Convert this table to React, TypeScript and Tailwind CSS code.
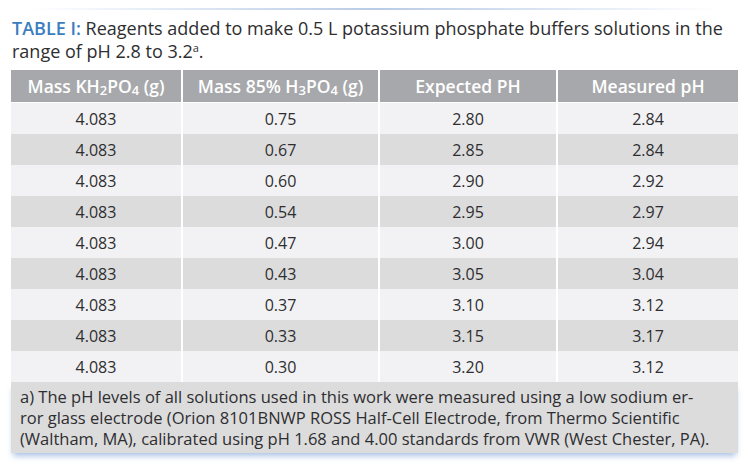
const rows = [
  ['4.083', '0.75', '2.80', '2.84'],
  ['4.083', '0.67', '2.85', '2.84'],
  ['4.083', '0.60', '2.90', '2.92'],
  ['4.083', '0.54', '2.95', '2.97'],
  ['4.083', '0.47', '3.00', '2.94'],
  ['4.083', '0.43', '3.05', '3.04'],
  ['4.083', '0.37', '3.10', '3.12'],
  ['4.083', '0.33', '3.15', '3.17'],
  ['4.083', '0.30', '3.20', '3.12'],
];

const cols = 'grid grid-cols-[170px_195px_176px_180px] gap-x-[2px]';

const Sub = ({ children }: { children: string }) => (
  <span className="relative top-[4px] text-[13px] leading-none">{children}</span>
);

export default function App() {
  return (
    <div className="w-[749px] h-[465px] bg-white font-['Open_Sans',sans-serif] text-[#2e2e30]">
      {/* top rule */}
      <div className="mx-[30px] mt-[8px] h-[2px] bg-gradient-to-r from-white via-[#b9cbe6] to-white" />

      <div className="pl-[12px]">
        <p className="mt-[7px] text-[18px] leading-[23px] whitespace-nowrap">
          <span className="text-[#3b7dc0] font-semibold">TABLE I:</span> Reagents added to make 0.5 L potassium
          phosphate buffers solutions in the
          <br />
          range of pH 2.8 to 3.2<span className="relative -top-[6px] text-[11px] leading-none">a</span>.
        </p>
      </div>

      <div className="ml-[11px] mt-[7px] w-[727px]">
        {/* header */}
        <div className={`${cols} h-[32px] text-white font-semibold text-[17.5px]`}>
          <div className="bg-[#a7a8ab] flex items-center justify-center">
            Mass KH<Sub>2</Sub>PO<Sub>4</Sub>&nbsp;(g)
          </div>
          <div className="bg-[#a7a8ab] flex items-center justify-center">
            Mass 85% H<Sub>3</Sub>PO<Sub>4</Sub>&nbsp;(g)
          </div>
          <div className="bg-[#a7a8ab] flex items-center justify-center">Expected PH</div>
          <div className="bg-[#a7a8ab] flex items-center justify-center">Measured pH</div>
        </div>

        {/* body */}
        <div className="mt-[1px] text-[16px]">
          {rows.map((r, i) => (
            <div key={i} className={`${cols} h-[31px]`}>
              {r.map((c, j) => (
                <div
                  key={j}
                  className={`${i % 2 === 0 ? 'bg-[#f2f2f4]' : 'bg-[#dcdcdd]'} flex items-center justify-center`}
                >
                  {c}
                </div>
              ))}
            </div>
          ))}
        </div>

        {/* footnote */}
        <div className="bg-[#dcdcdd] h-[71px] pl-[9px] pt-[4px] text-[16.5px] leading-[21px] whitespace-nowrap shadow-[0_5px_6px_-2px_rgba(70,120,200,0.45)]">
          a) The pH levels of all solutions used in this work were measured using a low sodium er-
          <br />
          ror glass electrode (Orion 8101BNWP ROSS Half-Cell Electrode, from Thermo Scientific
          <br />
          (Waltham, MA), calibrated using pH 1.68 and 4.00 standards from VWR (West Chester, PA).
        </div>
      </div>
    </div>
  );
}
